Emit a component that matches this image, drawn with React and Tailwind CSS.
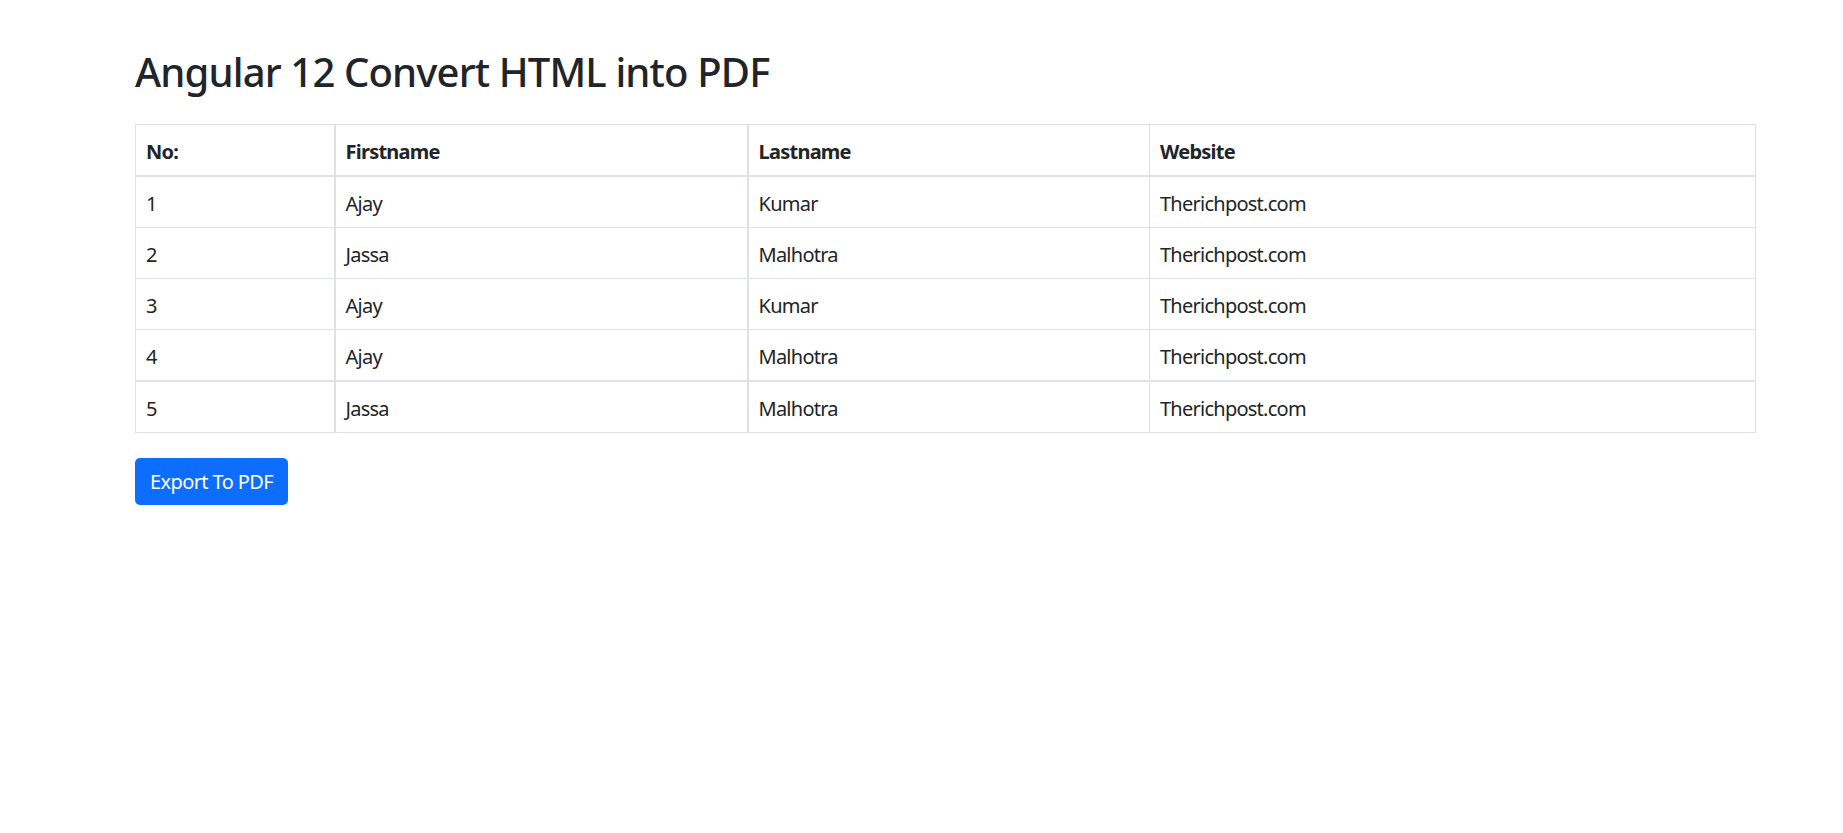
import React from 'react';

const rows = [
  { no: 1, first: 'Ajay', last: 'Kumar', site: 'Therichpost.com' },
  { no: 2, first: 'Jassa', last: 'Malhotra', site: 'Therichpost.com' },
  { no: 3, first: 'Ajay', last: 'Kumar', site: 'Therichpost.com' },
  { no: 4, first: 'Ajay', last: 'Malhotra', site: 'Therichpost.com' },
  { no: 5, first: 'Jassa', last: 'Malhotra', site: 'Therichpost.com' },
];

const App = () => {
  return (
    <div className="min-h-screen bg-white text-[#212529] font-['Noto_Sans',sans-serif]">
      <div className="pl-[135px] pr-[88px] pt-[48px]">
        <h2 className="text-[40px] leading-[48px] font-medium tracking-[-0.85px] mb-[28px]">Angular 12 Convert HTML into PDF</h2>

        <table className="w-[1620px] table-fixed border-collapse text-[20px] leading-[30px] tracking-[-0.75px]">
          <colgroup>
            <col className="w-[199px]" />
            <col className="w-[413px]" />
            <col className="w-[402px]" />
            <col className="w-[606px]" />
          </colgroup>
          <thead>
            <tr className="border-b-2 border-[#dee2e6]">
              <th className="border border-[#dee2e6] border-r-2 px-[10px] pt-[12px] pb-[8px] text-left font-bold">No:</th>
              <th className="border border-[#dee2e6] border-r-2 px-[10px] pt-[12px] pb-[8px] text-left font-bold">Firstname</th>
              <th className="border border-[#dee2e6] px-[10px] pt-[12px] pb-[8px] text-left font-bold">Lastname</th>
              <th className="border border-[#dee2e6] px-[10px] pt-[12px] pb-[8px] text-left font-bold">Website</th>
            </tr>
          </thead>
          <tbody>
            {rows.map((item) => (
              <tr key={item.no} className={item.no === 4 ? 'border-b-2 border-[#dee2e6]' : ''}>
                <td className="border border-[#dee2e6] border-r-2 px-[10px] pt-[12px] pb-[8px]">{item.no}</td>
                <td className="border border-[#dee2e6] border-r-2 px-[10px] pt-[12px] pb-[8px]">{item.first}</td>
                <td className="border border-[#dee2e6] px-[10px] pt-[12px] pb-[8px]">{item.last}</td>
                <td className="border border-[#dee2e6] px-[10px] pt-[12px] pb-[8px]">{item.site}</td>
              </tr>
            ))}
          </tbody>
        </table>

        <button className="mt-[25px] h-[47px] px-[15px] rounded-[5px] bg-[#0d6efd] text-white text-[20px] leading-[30px] tracking-[-0.6px]">
          Export To PDF
        </button>
      </div>
    </div>
  );
};

export default App;
